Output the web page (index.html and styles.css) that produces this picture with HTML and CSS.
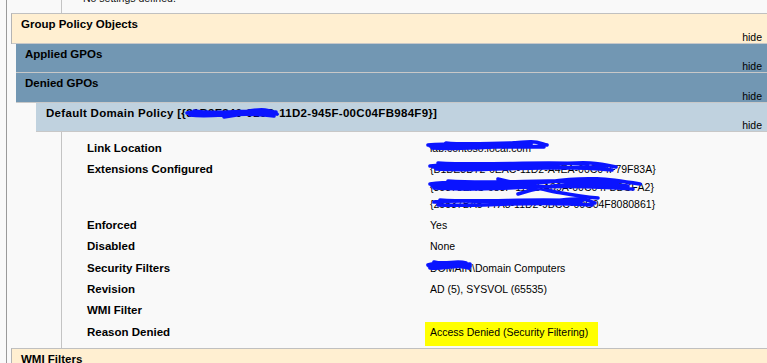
FILE: index.html
```html
<!DOCTYPE html>
<html>
<head>
<meta charset="utf-8">
<link rel="stylesheet" href="styles.css">
</head>
<body>
<div class="frame">
  <div class="prev">
    <div class="prev-text">No settings defined.</div>
  </div>

  <section class="cat">
    <div class="hdr cream">
      <div class="title">Group Policy Objects</div>
      <div class="hide">hide</div>
    </div>
  </section>

  <div class="sub">
    <div class="hdr blue">
      <div class="title">Applied GPOs</div>
      <div class="hide">hide</div>
    </div>
    <div class="hdr blue">
      <div class="title">Denied GPOs</div>
      <div class="hide">hide</div>
    </div>
    <div class="gpo">
      <div class="hdr light">
        <div class="title gpo-title">Default Domain Policy [{<span class="redact">31B2F340-016D<svg class="scribble s-title" viewBox="0 0 96 14" width="96" height="14"><path d="M3 7 C20 3 40 10 60 6 S85 4 93 8 M6 9 C30 12 55 5 90 10 M10 5 C35 9 60 3 80 6 M40 11 C60 7 75 6 92 6"/></svg></span>-11D2-945F-00C04FB984F9}]</div>
        <div class="hide">hide</div>
      </div>
    </div>

    <div class="detail">
      <div class="props">
        <div class="lbl">Link Location</div>
        <div class="val"><span class="redact">lab.contoso.local.com<svg class="scribble s-link" viewBox="0 0 124 14" width="124" height="14"><path d="M2 6 C25 3 50 9 80 5 S110 3 121 6 M6 9 C35 11 70 6 118 8 M20 4 C50 7 80 2 105 5 M4 7 C40 5 80 10 115 7"/></svg></span></div>

        <div class="lbl">Extensions Configured</div>
        <div class="val">
          <div class="line"><span class="redact">{B1BE8D72-6EAC-11D2-A4EA-00C04<svg class="scribble s-e1" viewBox="0 0 190 16" width="190" height="16"><path d="M2 7 C40 3 80 10 120 6 S170 4 188 8 M8 10 C60 13 120 5 184 11 M10 4 C60 7 110 2 160 5 M5 8 C60 6 120 12 180 7"/></svg></span>F79F83A}</div>
          <div class="line"><span class="redact">{35378EAC-683F-11D2-A89A-00C04FBBCF<svg class="scribble s-e2" viewBox="0 0 215 26" width="215" height="26"><path d="M2 8 C40 3 80 12 120 6 S180 3 212 8 M6 12 C60 16 120 6 205 13 M70 3 C110 12 140 20 170 22 M20 5 C70 9 120 2 190 6 M90 18 C120 8 150 6 200 10 M4 10 C50 8 100 14 150 9"/></svg></span>A2}</div>
          <div class="line">{<span class="redact">25537BA5-77A8-11D2-9BCC-00C04F<svg class="scribble s-e3" viewBox="0 0 165 14" width="165" height="14"><path d="M2 7 C40 3 80 10 120 6 S150 4 163 8 M6 10 C50 12 100 5 160 10 M8 5 C50 8 100 3 150 6"/></svg></span>8080861}</div>
        </div>

        <div class="lbl">Enforced</div>
        <div class="val">Yes</div>

        <div class="lbl">Disabled</div>
        <div class="val">None</div>

        <div class="lbl">Security Filters</div>
        <div class="val"><span class="redact">DOMAIN\<svg class="scribble s-sec" viewBox="0 0 46 14" width="46" height="14"><path d="M2 7 C12 3 25 9 44 6 M4 10 C18 12 30 5 43 10 M8 4 C20 7 30 2 40 5 M3 8 C15 6 30 9 44 8"/></svg></span>Domain Computers</div>

        <div class="lbl">Revision</div>
        <div class="val">AD (5), SYSVOL (65535)</div>

        <div class="lbl">WMI Filter</div>
        <div class="val"></div>

        <div class="lbl">Reason Denied</div>
        <div class="val"><span class="mark">Access Denied (Security Filtering)</span></div>
      </div>
    </div>
  </div>

  <section class="cat">
    <div class="hdr cream">
      <div class="title">WMI Filters</div>
      <div class="hide">hide</div>
    </div>
  </section>
</div>
</body>
</html>
```
FILE: styles.css
```css
html, body {
  margin: 0;
  padding: 0;
  background: #f9f9f9;
  overflow: hidden;
}
body {
  font-family: "Liberation Sans", Arial, sans-serif;
  font-size: 10.5px;
  color: #000;
  width: 767px;
  height: 363px;
}
.frame {
  margin-left: 6px;
  border-left: 1px solid #9a9a9a;
  height: 363px;
}
.prev {
  margin-left: 54px;
  border-left: 1px solid #c4c4c4;
  height: 13px;
  overflow: hidden;
}
.prev-text {
  margin-top: -9px;
  padding-left: 21px;
  line-height: 14px;
  color: #111;
}
.cat {
  margin-left: 4px;
  border-top: 1px solid #c0c0c0;
  border-left: 1px solid #b4b4b4;
}
.sub {
  margin-left: 9px;
}
.gpo {
  margin-left: 20px;
}
.hdr {
  box-sizing: border-box;
  height: 29.5px;
  border-bottom: 1px solid #c8c8c8;
  display: flex;
  flex-direction: column;
  justify-content: space-between;
}
.cream { background: #ffefd1; }
.blue { background: #7297b3; }
.light { background: #c0d2df; }
.title {
  font-weight: bold;
  font-size: 11.5px;
  line-height: 14px;
  padding: 3px 0 0 9px;
}
.blue .title { padding-left: 9px; }
.gpo-title { padding-left: 10px; letter-spacing: 0.3px; }
.hide {
  text-align: right;
  padding-right: 5px;
  line-height: 11px;
  font-size: 10.5px;
  letter-spacing: 0;
}
.detail {
  margin-left: 45px;
  border-left: 1px solid #c4c4c4;
  padding: 8px 0 7px 25px;
}
.props {
  display: grid;
  grid-template-columns: 343px 1fr;
  row-gap: 4px;
  align-items: baseline;
}
.lbl {
  font-weight: bold;
  font-size: 11.5px;
  line-height: 17.3px;
}
.val {
  line-height: 17.3px;
  font-size: 10.5px;
}
.redact {
  position: relative;
}
.scribble {
  position: absolute;
  fill: none;
  stroke: #0a14ff;
  stroke-width: 3.6;
  stroke-linecap: round;
}
.s-title { left: -2px; top: -1px; }
.s-link { left: -4px; top: -3px; }
.s-e1 { left: -2px; top: -4px; }
.s-e2 { left: -2px; top: -5px; }
.s-e3 { left: -2px; top: -3px; }
.s-sec { left: -4px; top: -4px; }
.mark {
  background: #ffff00;
  padding: 4px 10px 8px 5px;
  margin-left: -5px;
}
```
